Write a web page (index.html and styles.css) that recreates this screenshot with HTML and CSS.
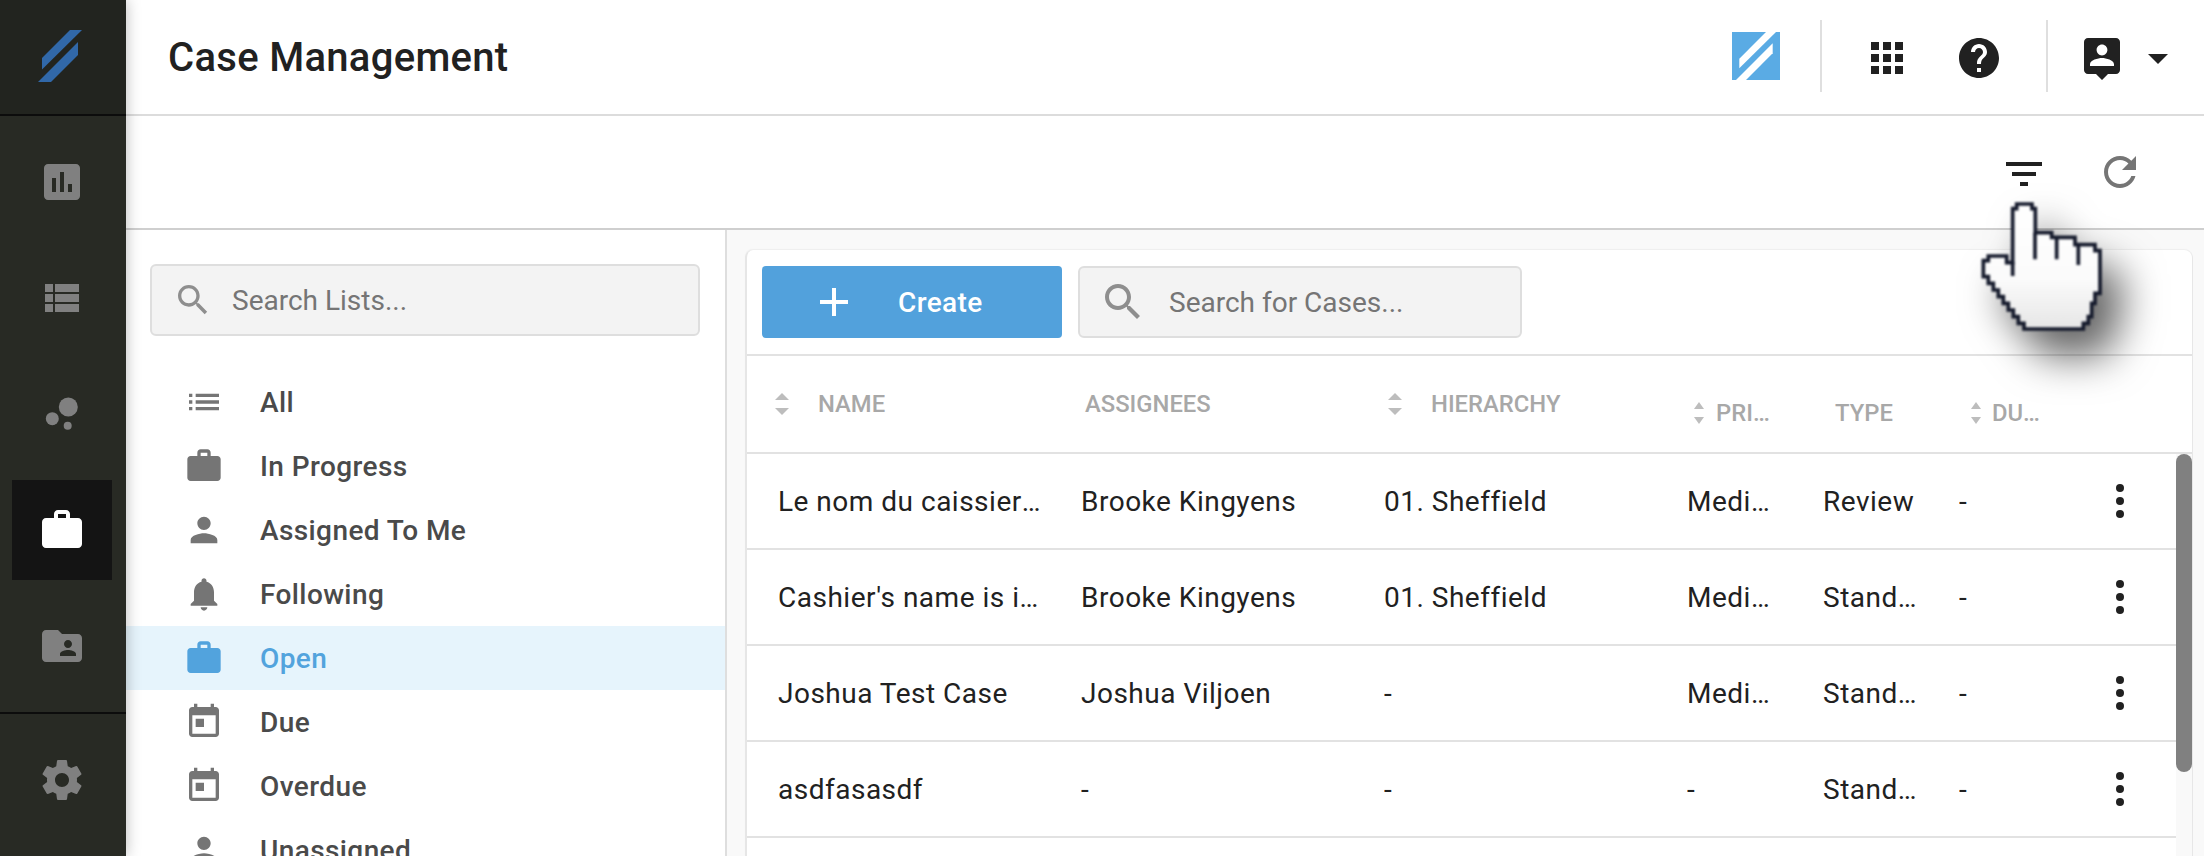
FILE: index.html
```html
<!DOCTYPE html>
<html lang="en">
<head>
<meta charset="utf-8">
<title>Case Management</title>
<link rel="stylesheet" href="styles.css">
</head>
<body>
<div class="app">
  <aside class="rail">
    <div class="rail-logo">
      <svg class="logo-mark" viewBox="0 0 126 114"><polygon points="70,30 82,30 42,69.5 42,58"/><polygon points="78,42 78,55 51,82 38,82"/></svg>
    </div>
    <nav class="rail-nav">
      <a class="rail-item"><svg class="i48" viewBox="0 0 24 24"><path d="M19 3H5c-1.1 0-2 .9-2 2v14c0 1.1.9 2 2 2h14c1.1 0 2-.9 2-2V5c0-1.1-.9-2-2-2zM9 17H7v-7h2v7zm4 0h-2V7h2v10zm4 0h-2v-4h2v4z"/></svg></a>
      <a class="rail-item"><svg class="rail-table" viewBox="0 0 34 28"><path d="M0 0h8v8H0zM0 10h8v8H0zM0 20h8v8H0zM10 0h24v8H10zM10 10h24v8H10zM10 20h24v8H10z"/></svg></a>
      <a class="rail-item"><svg class="i48" viewBox="0 0 48 48"><circle cx="30.3" cy="17" r="9.5"/><circle cx="14.3" cy="28.7" r="6.5"/><circle cx="29.7" cy="35.7" r="4"/></svg></a>
      <a class="rail-item active"><svg class="i48" viewBox="0 0 24 24"><path d="M20 6h-4V4c0-1.11-.89-2-2-2h-4c-1.11 0-2 .89-2 2v2H4c-1.11 0-1.99.89-1.99 2L2 19c0 1.11.89 2 2 2h16c1.11 0 2-.89 2-2V8c0-1.11-.89-2-2-2zm-6 0h-4V4h4v2z"/></svg></a>
      <a class="rail-item"><svg class="i48" viewBox="0 0 24 24"><path d="M20 6h-8l-2-2H4c-1.1 0-1.99.9-1.99 2L2 18c0 1.1.9 2 2 2h16c1.1 0 2-.9 2-2V8c0-1.1-.9-2-2-2zm-5 3c1.1 0 2 .9 2 2s-.9 2-2 2-2-.9-2-2 .9-2 2-2zm4 8h-8v-1c0-1.33 2.67-2 4-2s4 .67 4 2v1z"/></svg></a>
    </nav>
    <div class="rail-foot">
      <a class="rail-item"><svg class="i48" viewBox="0 0 24 24"><path d="M19.43 12.98c.04-.32.07-.64.07-.98s-.03-.66-.07-.98l2.11-1.65c.19-.15.24-.42.12-.64l-2-3.46c-.12-.22-.39-.3-.61-.22l-2.49 1c-.52-.4-1.08-.73-1.69-.98l-.38-2.65C14.46 2.18 14.25 2 14 2h-4c-.25 0-.46.18-.49.42l-.38 2.65c-.61.25-1.17.59-1.69.98l-2.49-1c-.23-.09-.49 0-.61.22l-2 3.46c-.13.22-.07.49.12.64l2.11 1.65c-.04.32-.07.65-.07.98s.03.66.07.98l-2.11 1.65c-.19.15-.24.42-.12.64l2 3.46c.12.22.39.3.61.22l2.49-1c.52.4 1.08.73 1.69.98l.38 2.65c.03.24.24.42.49.42h4c.25 0 .46-.18.49-.42l.38-2.65c.61-.25 1.17-.59 1.69-.98l2.49 1c.23.09.49 0 .61-.22l2-3.46c.12-.22.07-.49-.12-.64l-2.11-1.65zM12 15.5c-1.93 0-3.5-1.57-3.5-3.5s1.57-3.5 3.5-3.5 3.5 1.57 3.5 3.5-1.57 3.5-3.5 3.5z"/></svg></a>
    </div>
  </aside>

  <div class="main">
    <header class="topbar">
      <h1 class="title">Case Management</h1>
      <div class="top-actions">
        <svg class="brand" viewBox="0 0 48 48"><rect width="48" height="48" class="brand-bg"/><polygon class="brand-fg" points="34,0 44,0 7.3,36.3 7.3,26.7"/><polygon class="brand-fg" points="40.7,11.3 40.7,21.3 14,48 4,48"/></svg>
        <span class="vr vr-a"></span>
        <svg class="i48 dark apps" viewBox="0 0 24 24"><path d="M4 8h4V4H4v4zm6 12h4v-4h-4v4zm-6 0h4v-4H4v4zm0-6h4v-4H4v4zm6 0h4v-4h-4v4zm6-10v4h4V4h-4zm-6 4h4V4h-4v4zm6 6h4v-4h-4v4zm0 6h4v-4h-4v4z"/></svg>
        <svg class="i48 dark help" viewBox="0 0 24 24"><path d="M12 2C6.48 2 2 6.48 2 12s4.48 10 10 10 10-4.48 10-10S17.52 2 12 2zm1 17h-2v-2h2v2zm2.07-7.75l-.9.92C13.45 12.9 13 13.5 13 15h-2v-.5c0-1.1.45-2.1 1.17-2.83l1.24-1.26c.37-.36.59-.86.59-1.41 0-1.1-.9-2-2-2s-2 .9-2 2H8c0-2.21 1.79-4 4-4s4 1.79 4 4c0 .88-.36 1.68-.93 2.25z"/></svg>
        <span class="vr vr-b"></span>
        <svg class="i48 dark pin" viewBox="0 0 24 24"><path d="M19 2H5c-1.11 0-2 .9-2 2v14c0 1.1.89 2 2 2h4l3 3 3-3h4c1.1 0 2-.9 2-2V4c0-1.1-.9-2-2-2zm-7 3.3c1.49 0 2.7 1.21 2.7 2.7 0 1.49-1.21 2.7-2.7 2.7-1.49 0-2.7-1.21-2.7-2.7 0-1.49 1.21-2.7 2.7-2.7zM18 16H6v-.9c0-2 4-3.1 6-3.1s6 1.1 6 3.1v.9z"/></svg>
        <span class="caret"></span>
      </div>
    </header>

    <div class="toolbar">
      <svg class="i48 dark filter" viewBox="0 0 24 24"><path d="M10 18h4v-2h-4v2zM3 6v2h18V6H3zm3 7h12v-2H6v2z"/></svg>
      <svg class="i48 grey refresh" viewBox="0 0 24 24"><path d="M17.65 6.35C16.2 4.9 14.21 4 12 4c-4.42 0-7.99 3.58-7.99 8s3.57 8 7.99 8c3.73 0 6.84-2.55 7.73-6h-2.08c-.82 2.33-3.04 4-5.65 4-3.31 0-6-2.69-6-6s2.69-6 6-6c1.66 0 3.14.69 4.22 1.78L13 11h7V4l-2.35 2.35z"/></svg>
    </div>

    <div class="content">
      <section class="lists">
        <div class="search search-lists">
          <svg class="i40 grey-light" viewBox="0 0 24 24"><path d="M15.5 14h-.79l-.28-.27C15.41 12.59 16 11.11 16 9.5 16 5.91 13.09 3 9.5 3S3 5.91 3 9.5 5.91 16 9.5 16c1.61 0 3.09-.59 4.23-1.57l.27.28v.79l5 4.99L20.49 19l-4.99-5zm-6 0C7.01 14 5 11.99 5 9.5S7.01 5 9.5 5 14 7.01 14 9.5 11.99 14 9.5 14z"/></svg>
          <span>Search Lists...</span>
        </div>
        <ul class="list-menu">
          <li class="list-item"><svg class="i40" viewBox="0 0 24 24"><path d="M3 13h2v-2H3v2zm0 4h2v-2H3v2zm0-8h2V7H3v2zm4 4h14v-2H7v2zm0 4h14v-2H7v2zM7 7v2h14V7H7z"/></svg><span>All</span></li>
          <li class="list-item"><svg class="i40" viewBox="0 0 24 24"><path d="M20 6h-4V4c0-1.11-.89-2-2-2h-4c-1.11 0-2 .89-2 2v2H4c-1.11 0-1.99.89-1.99 2L2 19c0 1.11.89 2 2 2h16c1.11 0 2-.89 2-2V8c0-1.11-.89-2-2-2zm-6 0h-4V4h4v2z"/></svg><span>In Progress</span></li>
          <li class="list-item"><svg class="i40" viewBox="0 0 24 24"><path d="M12 12c2.21 0 4-1.79 4-4s-1.79-4-4-4-4 1.79-4 4 1.79 4 4 4zm0 2c-2.67 0-8 1.34-8 4v2h16v-2c0-2.66-5.33-4-8-4z"/></svg><span>Assigned To Me</span></li>
          <li class="list-item"><svg class="i40" viewBox="0 0 24 24"><path d="M12 22c1.1 0 2-.9 2-2h-4c0 1.1.89 2 2 2zm6-6v-5c0-3.07-1.64-5.64-4.5-6.32V4c0-.83-.67-1.5-1.5-1.5s-1.5.67-1.5 1.5v.68C7.63 5.36 6 7.92 6 11v5l-2 2v1h16v-1l-2-2z"/></svg><span>Following</span></li>
          <li class="list-item current"><svg class="i40" viewBox="0 0 24 24"><path d="M20 6h-4V4c0-1.11-.89-2-2-2h-4c-1.11 0-2 .89-2 2v2H4c-1.11 0-1.99.89-1.99 2L2 19c0 1.11.89 2 2 2h16c1.11 0 2-.89 2-2V8c0-1.11-.89-2-2-2zm-6 0h-4V4h4v2z"/></svg><span>Open</span></li>
          <li class="list-item"><svg class="i40" viewBox="0 0 24 24"><path d="M19 3h-1V1h-2v2H8V1H6v2H5c-1.11 0-1.99.9-1.99 2L3 19c0 1.1.89 2 2 2h14c1.1 0 2-.9 2-2V5c0-1.1-.9-2-2-2zm0 16H5V8h14v11zM7 10h5v5H7z"/></svg><span>Due</span></li>
          <li class="list-item"><svg class="i40" viewBox="0 0 24 24"><path d="M19 3h-1V1h-2v2H8V1H6v2H5c-1.11 0-1.99.9-1.99 2L3 19c0 1.1.89 2 2 2h14c1.1 0 2-.9 2-2V5c0-1.1-.9-2-2-2zm0 16H5V8h14v11zM7 10h5v5H7z"/></svg><span>Overdue</span></li>
          <li class="list-item"><svg class="i40" viewBox="0 0 24 24"><path d="M12 12c2.21 0 4-1.79 4-4s-1.79-4-4-4-4 1.79-4 4 1.79 4 4 4zm0 2c-2.67 0-8 1.34-8 4v2h16v-2c0-2.66-5.33-4-8-4z"/></svg><span>Unassigned</span></li>
        </ul>
      </section>

      <section class="pane">
        <div class="card">
          <div class="card-tools">
            <button class="create"><svg class="plus" viewBox="0 0 28 28"><path d="M12 0h4v12h12v4H16v12h-4V16H0v-4h12z"/></svg><span>Create</span></button>
            <div class="search search-cases">
              <svg class="i48 grey-light" viewBox="0 0 24 24"><path d="M15.5 14h-.79l-.28-.27C15.41 12.59 16 11.11 16 9.5 16 5.91 13.09 3 9.5 3S3 5.91 3 9.5 5.91 16 9.5 16c1.61 0 3.09-.59 4.23-1.57l.27.28v.79l5 4.99L20.49 19l-4.99-5zm-6 0C7.01 14 5 11.99 5 9.5S7.01 5 9.5 5 14 7.01 14 9.5 11.99 14 9.5 14z"/></svg>
              <span>Search for Cases...</span>
            </div>
          </div>
          <div class="thead grid">
            <div class="th th-name"><span class="sort"></span><span class="th-text">Name</span></div>
            <div class="th th-assignees"><span class="th-text">Assignees</span></div>
            <div class="th th-hierarchy"><span class="sort"></span><span class="th-text">Hierarchy</span></div>
            <div class="th low th-priority"><span class="sort small"></span><span class="th-text clip">Priority</span></div>
            <div class="th low th-type"><span class="th-text">Type</span></div>
            <div class="th low th-due"><span class="sort small"></span><span class="th-text clip">Due Date</span></div>
          </div>
          <div class="tbody">
            <div class="rows">
              <div class="row grid"><span class="td">Le nom du caissier est incorrect</span><span class="td">Brooke Kingyens</span><span class="td">01. Sheffield</span><span class="td">Medium</span><span class="td">Review</span><span class="td">-</span><span class="more"><i></i><i></i><i></i></span></div>
              <div class="row grid"><span class="td">Cashier's name is incorrect</span><span class="td">Brooke Kingyens</span><span class="td">01. Sheffield</span><span class="td">Medium</span><span class="td">Standard</span><span class="td">-</span><span class="more"><i></i><i></i><i></i></span></div>
              <div class="row grid"><span class="td">Joshua Test Case</span><span class="td">Joshua Viljoen</span><span class="td">-</span><span class="td">Medium</span><span class="td">Standard</span><span class="td">-</span><span class="more"><i></i><i></i><i></i></span></div>
              <div class="row grid"><span class="td">asdfasasdf</span><span class="td">-</span><span class="td">-</span><span class="td">-</span><span class="td">Standard</span><span class="td">-</span><span class="more"><i></i><i></i><i></i></span></div>
            </div>
            <div class="scroll"><div class="thumb"></div></div>
          </div>
        </div>
      </section>
    </div>
  </div>

  <svg class="hand" viewBox="0 0 912 780" aria-hidden="true">
    <defs><linearGradient id="handfill" x1="0" y1="0" x2="0" y2="1"><stop offset="0" stop-color="#ffffff"/><stop offset=".6" stop-color="#fbfbfb"/><stop offset="1" stop-color="#e6e6e6"/></linearGradient></defs>
    <path class="hand-body" d="M350 222 H396 V236 H406 V308 H455 V322 H525 V344 H585 V362 H600 V490 H585 V520 H575 V560 H565 V580 H550 V597 H372 V580 H355 V560 H340 V540 H325 V520 H310 V500 H295 V480 H280 V460 H265 V440 H250 V392 H265 V378 H320 V398 H338 V236 H350 Z"/>
    <path class="hand-lines" d="M405 308 V388 M470 324 V388 M535 344 V405 M338 395 V438"/>
  </svg>
</div>
</body>
</html>
```

FILE: styles.css
```css
* { box-sizing: border-box; }
html, body { margin: 0; height: 100%; }
body { font-family: Roboto, "Liberation Sans", sans-serif; background: #fff; overflow: hidden; }
svg { display: block; flex: none; fill: currentColor; }

.app { position: relative; display: flex; width: 2204px; height: 856px; overflow: hidden; }

/* left rail */
.rail { position: relative; z-index: 2; flex: none; width: 126px; display: flex; flex-direction: column; background: #282a24; box-shadow: 0 0 14px rgba(0, 0, 0, .28); color: #808080; }
.rail-logo { height: 116px; background: #22241f; border-bottom: 2px solid #0c0c0c; }
.logo-mark { width: 126px; height: 114px; fill: #3168a8; }
.rail-nav { display: flex; flex-direction: column; gap: 16px; padding-top: 16px; height: 598px; border-bottom: 2px solid #0c0c0c; }
.rail-foot { padding-top: 16px; }
.rail-item { display: flex; align-items: center; justify-content: center; width: 100px; height: 100px; margin-left: 12px; }
.rail-item.active { background: #141414; color: #fff; }
.rail-table { width: 34px; height: 28px; }
.i48 { width: 48px; height: 48px; }
.i40 { width: 40px; height: 40px; }

/* top bar */
.main { flex: 1; min-width: 0; display: flex; flex-direction: column; }
.topbar { flex: none; height: 116px; display: flex; align-items: center; justify-content: space-between; padding-left: 42px; background: #fff; border-bottom: 2px solid #dcdcdc; }
.title { margin: 0; font-size: 40px; font-weight: 500; color: #212121; letter-spacing: .3px; }
.top-actions { display: flex; align-items: center; height: 72px; margin-bottom: 2px; color: #212121; }
.brand { width: 48px; height: 48px; }
.brand-bg { fill: #5aabe4; }
.brand-fg { fill: #fff; }
.vr { width: 2px; height: 72px; background: #dfdfdf; }
.vr-a { margin-left: 40px; }
.apps { margin: 4px 0 0 41px; }
.help { margin: 4px 0 0 44px; }
.vr-b { margin-left: 43px; }
.pin { margin: 4px 0 0 30px; }
.caret { margin: 6px 36px 0 22px; width: 0; height: 0; border-left: 10px solid transparent; border-right: 10px solid transparent; border-top: 10px solid #212121; }
.dark { color: #212121; }
.grey { color: #757575; }
.grey-light { color: #8e8e8e; }

/* toolbar */
.toolbar { flex: none; height: 114px; display: flex; align-items: center; justify-content: flex-end; gap: 48px; padding: 0 60px 0 0; border-bottom: 2px solid #cfcfcf; background: #fff; }
.filter { margin-top: 4px; }

/* content */
.content { flex: 1; min-height: 0; display: flex; }
.lists { flex: none; width: 601px; padding-top: 34px; background: #fff; border-right: 2px solid #dedede; overflow: hidden; }
.search { display: flex; align-items: center; background: #f3f3f3; border: 2px solid #dedede; border-radius: 6px; color: #757575; font-size: 28px; }
.search-lists { width: 550px; height: 72px; margin-left: 24px; padding-left: 21px; gap: 19px; }
.list-menu { list-style: none; margin: 34px 0 0; padding: 0; }
.list-item { display: flex; align-items: center; height: 64px; padding-left: 58px; gap: 36px; color: #757575; }
.list-item span { padding-top: 1px; font-size: 28px; font-weight: 500; color: #4a4a4a; letter-spacing: .4px; }
.list-item.current { background: #e6f4fc; color: #52a3dd; }
.list-item.current span { color: #52a3dd; }

/* card */
.pane { flex: 1; min-width: 0; padding: 20px 12px 0 18px; background: #f9f9f9; }
.card { height: 100%; display: flex; flex-direction: column; background: #fff; border-left: 2px solid #e6e6e6; border-radius: 8px 8px 0 0; box-shadow: 0 -1px 1px #eeeeee, 1px 0 0 #e6e6e6; }
.card-tools { flex: none; height: 106px; display: flex; gap: 16px; padding: 16px 0 0 15px; border-bottom: 2px solid #e2e2e2; }
.create { display: flex; align-items: center; width: 300px; height: 72px; padding: 0 0 0 58px; gap: 50px; border: 0; border-radius: 4px; background: #52a1dc; color: #fff; font: 500 28px Roboto, sans-serif; letter-spacing: .4px; }
.plus { width: 28px; height: 28px; }
.search-cases { width: 444px; height: 72px; padding-left: 19px; gap: 22px; }

/* table */
.grid { display: grid; grid-template-columns: 302px 303px 303px 136px 136px 157px 1fr; padding-left: 32px; }
.thead { flex: none; height: 98px; border-bottom: 2px solid #e2e2e2; align-items: center; color: #a8a8a8; font-size: 23.8px; font-weight: 500; text-transform: uppercase; }
.th { display: flex; align-items: center; min-width: 0; }
.th.low { padding-top: 18px; }
.th-text { white-space: nowrap; }
.clip { overflow: hidden; text-overflow: ellipsis; }
.sort { position: relative; flex: none; width: 14px; height: 22px; margin-right: 29px; }
.sort::before, .sort::after { content: ""; position: absolute; left: 0; border-left: 7px solid transparent; border-right: 7px solid transparent; }
.sort::before { top: 0; border-bottom: 7px solid #bdbdbd; }
.sort::after { bottom: 0; border-top: 7px solid #bdbdbd; }
.th-name { margin-left: -4px; }
.th-assignees { padding-left: 4px; }
.th-hierarchy { padding-left: 4px; }
.sort.small { width: 10px; margin-right: 12px; }
.sort.small::before, .sort.small::after { border-left-width: 5px; border-right-width: 5px; }
.th-priority { padding-left: 7px; }
.th-priority .th-text { width: 54px; }
.th-type { padding-left: 12px; }
.th-due { padding-left: 12px; }
.th-due .sort.small { margin-right: 11px; }
.th-due .th-text { width: 48px; }

.tbody { flex: 1; min-height: 0; display: flex; }
.rows { flex: 1; min-width: 0; }
.row { height: 96px; border-bottom: 2px solid #e2e2e2; align-items: center; color: #212121; font-size: 28px; letter-spacing: .5px; }
.td { min-width: 0; white-space: nowrap; overflow: hidden; text-overflow: ellipsis; padding-right: 40px; }
.row .td:nth-child(1) { margin-left: -1px; padding-right: 34px; }
.row .td:nth-child(4) { padding-right: 0; width: 88px; }
.row .td:nth-child(5) { padding-right: 0; width: 96px; }
.more { display: flex; flex-direction: column; gap: 5px; width: 8px; }
.more i { display: block; width: 8px; height: 8px; border-radius: 50%; background: #212121; }
.scroll { flex: none; width: 16px; background: #f9f9f9; }
.thumb { height: 318px; border-radius: 8px; background: #808080; }

/* pointer overlay */
.hand { position: absolute; left: 1900px; top: 130px; z-index: 3; width: 304px; height: 260px; overflow: visible; filter: blur(1px) drop-shadow(20px 26px 20px rgba(0, 0, 0, .6)); }
.hand-body { fill: url(#handfill); stroke: #151a2c; stroke-width: 11; stroke-linejoin: miter; }
.hand-lines { fill: none; stroke: #151a2c; stroke-width: 11; }
```
